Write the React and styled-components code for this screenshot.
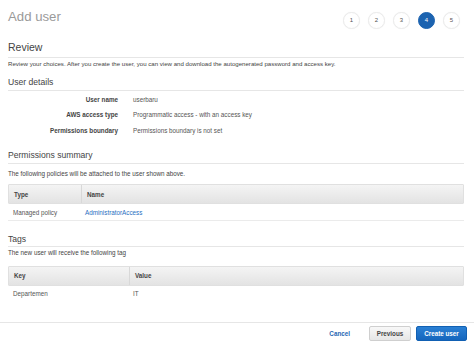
import React from "react";
import styled, { createGlobalStyle } from "styled-components";

const GlobalStyle = createGlobalStyle`
  html, body {
    margin: 0;
    padding: 0;
    background: #ffffff;
  }
  body {
    font-family: "Liberation Sans", Arial, sans-serif;
    color: #444;
  }
`;

const steps = [1, 2, 3, 4, 5];

const details = [
  { label: "User name", value: "userbaru" },
  { label: "AWS access type", value: "Programmatic access - with an access key" },
  { label: "Permissions boundary", value: "Permissions boundary is not set" },
];

const App = () => {
  return (
    <>
      <GlobalStyle />
      <Page>
        <Content>
          <Header>
            <Title>Add user</Title>
            <Steps>
              {steps.map((n) => (
                <Step key={n} active={n === 4}>
                  {n}
                </Step>
              ))}
            </Steps>
          </Header>

          <MainHeading>Review</MainHeading>
          <Text top={2.5} size={6.1}>
            Review your choices. After you create the user, you can view and
            download the autogenerated password and access key.
          </Text>

          <SubHeading top={9}>User details</SubHeading>
          <DetailList>
            {details.map((row) => (
              <DetailRow key={row.label}>
                <Label>{row.label}</Label>
                <Value>{row.value}</Value>
              </DetailRow>
            ))}
          </DetailList>

          <SubHeading top={7.5}>Permissions summary</SubHeading>
          <Text top={6}>The following policies will be attached to the user shown above.</Text>
          <Table first={72} top={6.5}>
            <HeadRow>
              <HeadCell>Type</HeadCell>
              <HeadCell>Name</HeadCell>
            </HeadRow>
            <BodyRow bordered>
              <Cell>Managed policy</Cell>
              <Cell>
                <Link href="#">AdministratorAccess</Link>
              </Cell>
            </BodyRow>
          </Table>

          <SubHeading top={12.5}>Tags</SubHeading>
          <Text top={1.5}>The new user will receive the following tag</Text>
          <Table first={120} top={9}>
            <HeadRow>
              <HeadCell>Key</HeadCell>
              <HeadCell>Value</HeadCell>
            </HeadRow>
            <BodyRow>
              <Cell>Departemen</Cell>
              <Cell>IT</Cell>
            </BodyRow>
          </Table>
        </Content>

        <Footer>
          <CancelButton>Cancel</CancelButton>
          <SecondaryButton>Previous</SecondaryButton>
          <PrimaryButton>Create user</PrimaryButton>
        </Footer>
      </Page>
    </>
  );
};

const Page = styled.div`
  width: 474px;
  height: 344px;
  overflow: hidden;
  display: flex;
  flex-direction: column;
`;

const Content = styled.div`
  padding: 0 10px 0 8px;
  flex: 1;
`;

const Header = styled.div`
  display: flex;
  justify-content: space-between;
  align-items: flex-start;
  height: 41px;
`;

const Title = styled.h1`
  margin: 9px 0 0;
  font-size: 13.2px;
  line-height: 15px;
  font-weight: normal;
  color: #9a9a9a;
`;

const Steps = styled.div`
  display: flex;
  gap: 8px;
  margin: 11.5px 4px 0 0;
`;

const Step = styled.div`
  width: 17px;
  height: 17px;
  box-sizing: border-box;
  border-radius: 50%;
  display: flex;
  align-items: center;
  justify-content: center;
  font-size: 6px;
  border: 1px solid ${(p) => (p.active ? "#1c63b0" : "#ececec")};
  background: ${(p) => (p.active ? "#1c63b0" : "#ffffff")};
  color: ${(p) => (p.active ? "#ffffff" : "#555")};
  box-shadow: ${(p) => (p.active ? "none" : "0 0 1px rgba(0, 0, 0, 0.08)")};
`;

const MainHeading = styled.h2`
  margin: 0;
  font-size: 10.5px;
  line-height: 12px;
  font-weight: normal;
  color: #444;
  padding-bottom: 3.5px;
  border-bottom: 1px solid #e6e6e6;
`;

const SubHeading = styled.h3`
  margin: ${(p) => p.top}px 0 0;
  font-size: 8.6px;
  line-height: 10px;
  font-weight: normal;
  color: #444;
  padding-bottom: 2.5px;
  border-bottom: 1px solid #e6e6e6;
`;

const Text = styled.p`
  margin: ${(p) => p.top}px 0 0;
  font-size: ${(p) => p.size || 6.3}px;
  line-height: 8px;
  color: #444;
`;

const DetailList = styled.div`
  padding-top: 1.5px;
  padding-bottom: 4px;
`;

const DetailRow = styled.div`
  display: grid;
  grid-template-columns: 110px 1fr;
  column-gap: 15px;
  height: 15.5px;
  align-items: center;
  font-size: 6.3px;
  line-height: 8px;
`;

const Label = styled.span`
  text-align: right;
  font-weight: bold;
  color: #444;
`;

const Value = styled.span`
  color: #555;
`;

const Table = styled.div`
  margin-top: ${(p) => p.top}px;
  --first: ${(p) => p.first}px;
`;

const HeadRow = styled.div`
  display: grid;
  grid-template-columns: var(--first) 1fr;
  box-sizing: border-box;
  height: 20px;
  align-items: stretch;
  background: linear-gradient(#f4f4f4, #e3e3e3);
  border: 1px solid #e0e0e0;
  border-radius: 1px;
`;

const HeadCell = styled.div`
  display: flex;
  align-items: center;
  padding-left: 5px;
  font-size: 6.3px;
  font-weight: bold;
  color: #444;
  & + & {
    border-left: 1px solid #d8d8d8;
  }
`;

const BodyRow = styled.div`
  display: grid;
  grid-template-columns: var(--first) 1fr;
  height: 16px;
  align-items: center;
  border-bottom: 1px solid ${(p) => (p.bordered ? "#ebebeb" : "transparent")};
`;

const Cell = styled.div`
  padding-left: 5px;
  font-size: 6.3px;
  color: #555;
`;

const Link = styled.a`
  color: #1f6fbf;
  text-decoration: none;
`;

const Footer = styled.div`
  border-top: 1px solid #e6e6e6;
  height: 20px;
  display: flex;
  align-items: center;
  justify-content: flex-end;
  gap: 5px;
  padding: 0 7px 0 0;
  margin-bottom: 1px;
`;

const ButtonBase = styled.button`
  font-family: "Liberation Sans", Arial, sans-serif;
  font-size: 6.3px;
  font-weight: bold;
  height: 15px;
  border-radius: 2px;
  padding: 0 6px;
  cursor: pointer;
`;

const CancelButton = styled(ButtonBase)`
  background: none;
  border: none;
  color: #1f66b3;
  margin-right: 8px;
`;

const SecondaryButton = styled(ButtonBase)`
  width: 42px;
  background: linear-gradient(#f8f8f8, #e6e6e6);
  border: 1px solid #cfcfcf;
  color: #444;
`;

const PrimaryButton = styled(ButtonBase)`
  width: 51px;
  background: linear-gradient(#2a7fd3, #1566bd);
  border: 1px solid #1160b3;
  color: #ffffff;
`;

export default App;
